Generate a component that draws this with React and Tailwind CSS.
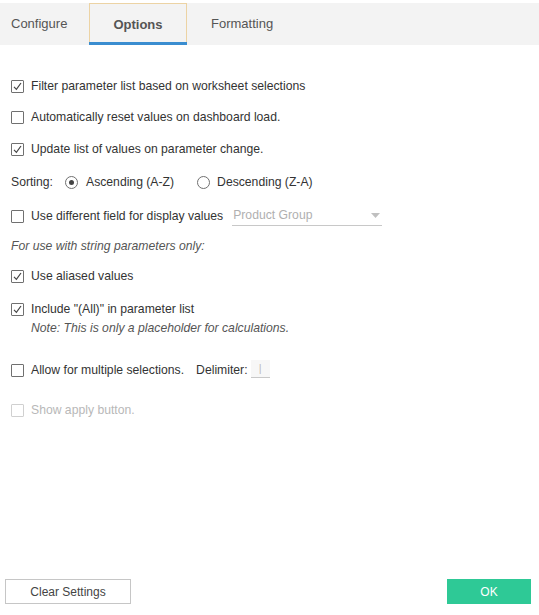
import React from "react";

const Check = ({ checked, disabled }) => (
  <span
    className={`w-[13px] h-[13px] flex items-center justify-center border rounded-[1px] shrink-0 ${
      disabled ? "border-[#d0d0d0]" : "border-[#707070]"
    }`}
  >
    {checked && (
      <svg width="9" height="9" viewBox="0 0 9 9" fill="none">
        <path d="M1 4.8 L3.4 7.3 L8 1" stroke="#444" strokeWidth="1.2" />
      </svg>
    )}
  </span>
);

const Radio = ({ checked }) => (
  <span className="w-[13px] h-[13px] rounded-full border border-[#707070] flex items-center justify-center shrink-0">
    {checked && <span className="w-[5px] h-[5px] rounded-full bg-[#444]" />}
  </span>
);

const Row = ({ className = "", children }) => (
  <div className={`flex items-center h-5 pl-[11px] ${className}`}>{children}</div>
);

export default function App() {
  return (
    <div
      className="w-[539px] h-[615px] flex flex-col bg-white text-[12.2px] text-[#333]"
      style={{ fontFamily: '"Liberation Sans", Arial, sans-serif' }}
    >
      {/* Tabs */}
      <div className="mt-[3px] h-[42px] bg-[#f3f3f3] flex text-[13px] text-[#555]">
        <div className="w-[89px] flex items-center pl-[11px]">Configure</div>
        <div className="w-[98px] flex items-center justify-center font-bold border border-b-0 border-[#ecd3a4] relative">
          Options
          <span className="absolute left-[-1px] right-[-1px] bottom-0 h-[3px] bg-[#3a8dd0]" />
        </div>
        <div className="flex items-center pl-[24px]">Formatting</div>
      </div>

      {/* Options */}
      <Row className="mt-[31px]">
        <Check checked />
        <span className="ml-[7px]">Filter parameter list based on worksheet selections</span>
      </Row>
      <Row className="mt-[11px]">
        <Check />
        <span className="ml-[7px]">Automatically reset values on dashboard load.</span>
      </Row>
      <Row className="mt-[12px]">
        <Check checked />
        <span className="ml-[7px]">Update list of values on parameter change.</span>
      </Row>
      <Row className="mt-[13px]">
        <span>Sorting:</span>
        <span className="ml-[12px]"><Radio checked /></span>
        <span className="ml-[8px]">Ascending (A-Z)</span>
        <span className="ml-[23px]"><Radio /></span>
        <span className="ml-[7px]">Descending (Z-A)</span>
      </Row>
      <Row className="mt-[14px]">
        <Check />
        <span className="ml-[7px]">Use different field for display values</span>
        <div className="ml-[9px] w-[150px] h-5 flex items-center justify-between border-b border-[#c8c8c8] text-[#b0b0b0] pl-[1px] pr-[2px]">
          <span>Product Group</span>
          <svg width="9" height="5" viewBox="0 0 9 5">
            <path d="M0 0 H9 L4.5 5 Z" fill="#c0c0c0" />
          </svg>
        </div>
      </Row>
      <Row className="mt-[10px] italic text-[#555]">For use with string parameters only:</Row>
      <Row className="mt-[10px]">
        <Check checked />
        <span className="ml-[7px]">Use aliased values</span>
      </Row>
      <Row className="mt-[13px]">
        <Check checked />
        <span className="ml-[7px]">Include "(All)" in parameter list</span>
      </Row>
      <div className="pl-[31px] h-[19px] flex items-center italic text-[#555]">
        Note: This is only a placeholder for calculations.
      </div>
      <Row className="mt-[22px]">
        <Check />
        <span className="ml-[7px]">Allow for multiple selections.</span>
        <span className="ml-[12px]">Delimiter:</span>
        <span className="ml-[3px] w-[19px] h-[18px] mb-[3px] bg-[#f7f7f7] border-b border-[#c8c8c8] flex items-center justify-center text-[#bbb] text-[11px]">
          |
        </span>
      </Row>
      <Row className="mt-[20px] text-[#b8b8b8]">
        <Check disabled />
        <span className="ml-[7px]">Show apply button.</span>
      </Row>

      {/* Footer */}
      <div className="mt-auto mb-[11px] flex justify-between px-[5px] pr-[8px]">
        <button className="w-[126px] h-[25px] border border-[#c6c6c6] bg-white text-[#444] text-[12px]">
          Clear Settings
        </button>
        <button className="w-[84px] h-[25px] bg-[#2ec996] text-white text-[12px]">OK</button>
      </div>
    </div>
  );
}
